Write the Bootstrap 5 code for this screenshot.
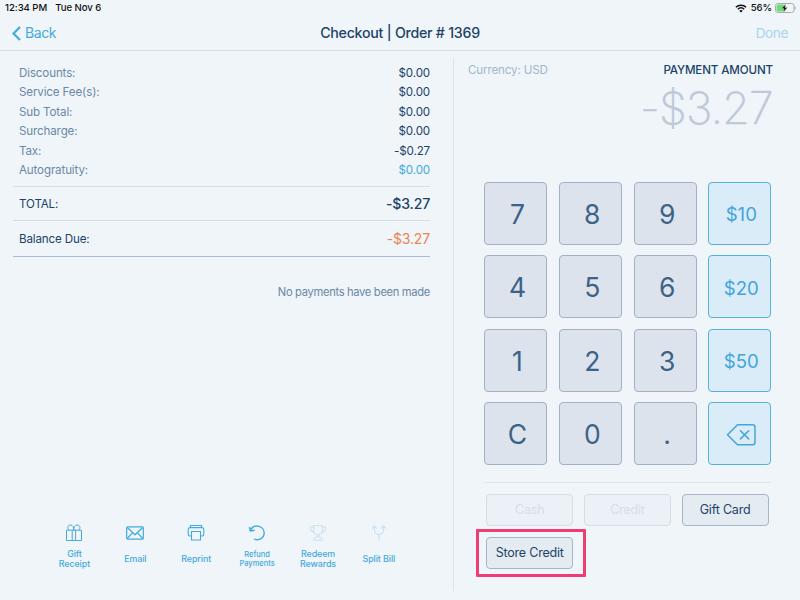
<!DOCTYPE html>
<html lang="en">
<head>
<meta charset="utf-8">
<meta name="viewport" content="width=device-width, initial-scale=1">
<title>Checkout | Order # 1369</title>
<link href="https://cdn.jsdelivr.net/npm/bootstrap@5.3.0/dist/css/bootstrap.min.css" rel="stylesheet">
<style>
  :root { --navy:#1d4368; --slate:#6b88a6; --sky:#45aadb; }
  body { width:800px; height:600px; background:#eff5f9; color:var(--navy); font-family:Inter,"Liberation Sans",sans-serif; font-size:11.6px; letter-spacing:-.14px; line-height:1; }
  svg { fill:none; stroke:currentColor; display:block; flex:none; }
  .status-bar { height:16px; padding:0 5px; color:#111; font-size:9.6px; font-weight:500; letter-spacing:-.05px; }
  .title-bar { height:35px; border-bottom:1px solid #d5dfe8; padding:0 12px; }
  .title-bar > * { flex:1 1 0; }
  .title-bar .heading { flex:0 0 auto; font-size:14.2px; font-weight:500; letter-spacing:-.25px; }
  .sky { color:var(--sky); }
  .back { font-size:14px; letter-spacing:-.4px; }
  .done { font-size:13.6px; letter-spacing:-.4px; color:#a9d6ec; padding-top:2px; }
  .summary { width:453px; padding:12px 23px 0 13px; }
  .line-item { height:19.5px; padding:1.5px 0 0 6px; }
  .line-item span:first-child { color:var(--slate); }
  .sum-row { border-top:1px solid #d5dfe8; padding:2px 0 0 6px; }
  .sum-row .amount { font-size:14px; letter-spacing:-.15px; padding-bottom:2px; }
  .orange { color:#ec8455; }
  .balance { border-bottom:1px solid #a9bbd0; height:37px; }
  .no-pay { color:var(--slate); margin-top:30px; font-size:11.2px; letter-spacing:-.33px; }
  .actions { margin:0 0 26px 31px; }
  .action { width:60.9px; flex:none; color:var(--sky); font-size:8.9px; font-weight:500; letter-spacing:-.1px; }
  .action svg { height:18px; width:18px; }
  .action .caption { height:30px; line-height:10px; margin-top:2px; }
  .action .tiny { font-size:7.5px; line-height:9px; letter-spacing:0; }
  .faded { color:#cce3f0; }
  .pay-panel { width:347px; margin:7px 0 9px; border-left:1px solid #dde5ec; padding:0 27px 0 14px; }
  .currency { color:#a3b5c9; }
  .big-amount { font-size:44.5px; letter-spacing:-.7px; font-weight:200; color:#bdc8d9; line-height:48px; height:48px; padding-top:1px; -webkit-text-stroke:.4px #bdc8d9; }
  .keypad { display:grid; grid-template-columns:repeat(4,63px); grid-template-rows:repeat(4,63px); column-gap:11.8px; row-gap:10.4px; margin:51px 0 0 16px; }
  .keypad .btn { --bs-btn-bg:#dce3ed; --bs-btn-border-color:#a1b1c6; --bs-btn-color:#3c6387; --bs-btn-border-radius:4px; padding:1px 0 0 4px; font-size:26.5px; line-height:1; }
  .keypad .btn.quick { --bs-btn-bg:#d9ecf7; --bs-btn-border-color:#55b2dc; --bs-btn-color:#45a5d9; font-size:18.6px; margin:0 .6px 0 -.6px; padding-top:2px; }
  .tenders { border-top:1px solid #dbe4eb; margin:16.9px 2px 0 16px; padding:11px 0 0 2.2px; display:grid; grid-template-columns:repeat(3,87px); gap:11.5px 10.7px; }
  .tenders .btn { height:31.5px; --bs-btn-bg:#e4ebf1; --bs-btn-border-color:#a5b6c8; --bs-btn-color:#1d4368; --bs-btn-border-radius:4px; --bs-btn-disabled-bg:#ecf1f8; --bs-btn-disabled-border-color:#d5dde5; --bs-btn-disabled-color:#d6dde5; --bs-btn-disabled-opacity:1; padding:1px 0 0; font-size:12.5px; letter-spacing:-.2px; line-height:1; }
  .spotlight { position:relative; }
  .spotlight::after { content:""; position:absolute; inset:-9px -13.5px -9.5px -11.5px; border:3px solid #ed3d72; border-radius:1px; pointer-events:none; }
</style>
</head>
<body class="d-flex flex-column overflow-hidden">
<header>
  <div class="status-bar d-flex justify-content-between align-items-center">
    <div class="d-flex"><span id="clock">12:34 PM</span><span class="ms-2" id="date">Tue Nov 6</span></div>
    <div class="d-flex align-items-center">
      <svg width="12" height="9" viewBox="0 0 12 9" stroke-width="1.5"><path d="M.9 3.2C3.8.5 8.2.5 11.1 3.2M2.8 5.2C4.7 3.5 7.3 3.5 9.2 5.2"/><path d="M4.2 6.7Q6 5.3 7.8 6.7L6 8.5Z" fill="currentColor" stroke="none"/></svg>
      <span style="margin-left:4px">56%</span>
      <svg width="21" height="10" viewBox="0 0 21 10" style="margin:0 -1px 0 3px"><rect x=".5" y=".5" width="18.5" height="9" rx="2.4" stroke="#a7abb0"/><path d="M1.5 3Q1.5 1.5 3 1.5H10.3V8.5H3Q1.5 8.5 1.5 7Z" fill="#6edb78" stroke="none"/><path d="M20 3.5V6.5" stroke="#a7abb0"/><path d="M10.8 1.2L6.5 5.6H9L8.3 9L12.6 4.5H10Z" fill="#111" stroke="#eff5fa" stroke-width=".3"/></svg>
    </div>
  </div>
  <nav class="title-bar d-flex align-items-center">
    <div class="back sky d-flex align-items-center"><svg width="9" height="15" viewBox="0 0 9 15" stroke-width="2.2"><path d="M8 .9L1.500 7.500L8 14.100"/></svg><span style="margin-left:4px">Back</span></div>
    <div class="heading">Checkout | Order # 1369</div>
    <div class="done text-end">Done</div>
  </nav>
</header>
<main class="d-flex flex-grow-1">
  <section class="summary d-flex flex-column">
    <div class="line-item d-flex justify-content-between align-items-center"><span>Discounts:</span><span>$0.00</span></div>
    <div class="line-item d-flex justify-content-between align-items-center"><span>Service Fee(s):</span><span>$0.00</span></div>
    <div class="line-item d-flex justify-content-between align-items-center"><span>Sub Total:</span><span>$0.00</span></div>
    <div class="line-item d-flex justify-content-between align-items-center"><span>Surcharge:</span><span>$0.00</span></div>
    <div class="line-item d-flex justify-content-between align-items-center"><span>Tax:</span><span>-$0.27</span></div>
    <div class="line-item d-flex justify-content-between align-items-center"><span>Autogratuity:</span><span class="sky">$0.00</span></div>
    <div class="sum-row d-flex justify-content-between align-items-center" style="margin-top:6px;height:34px"><span>TOTAL:</span><span class="amount" style="font-weight:500">-$3.27</span></div>
    <div class="sum-row balance d-flex justify-content-between align-items-center"><span>Balance Due:</span><span class="amount orange">-$3.27</span></div>
    <div class="no-pay text-end">No payments have been made</div>
    <div class="actions d-flex mt-auto">
      <div class="action d-flex flex-column align-items-center">
        <svg viewBox="0 0 18 18"><path d="M1.500 6.200H16.500V16.500H1.500ZM7.200 6.200V16.500M10.600 6.200V16.500M3.800 6.200C2.200 4.200 2.500 1 5.300 1C8.200 1 8.800 3.700 8.800 6.200M13.900 6.200C15.500 4.200 15.200 1 12.300 1C9.400 1 8.800 3.700 8.800 6.200"/></svg>
        <div class="caption d-flex align-items-center text-center">Gift<br>Receipt</div>
      </div>
      <div class="action d-flex flex-column align-items-center">
        <svg viewBox="0 0 18 18" stroke-width="1.200"><rect x=".7" y="2.800" width="16.600" height="12.400" rx="1"/><path d="M1.300 3.500L9 10.800L16.700 3.500M1.300 14.500L6.600 8.600M16.700 14.500L11.400 8.600"/></svg>
        <div class="caption d-flex align-items-center text-center">Email</div>
      </div>
      <div class="action d-flex flex-column align-items-center">
        <svg viewBox="0 0 18 18" stroke-width="1.100"><path d="M4.500 12H3C1.800 12 1.200 11.400 1.200 10.300V5.300C1.200 4.200 1.800 3.600 3 3.600H15C16.200 3.600 16.800 4.200 16.800 5.300V10.300C16.800 11.400 16.200 12 15 12H13.500M3.500 3.600V1.500H14.500V3.600M4.500 7.500H13.500V16H4.500Z"/></svg>
        <div class="caption d-flex align-items-center text-center">Reprint</div>
      </div>
      <div class="action d-flex flex-column align-items-center">
        <svg viewBox="0 0 18 18" stroke-width="1.400"><path d="M2.500 6.500C4 3 7 1.700 9.800 2.100C13.500 2.600 16.200 5.500 16.200 9C16.200 12.800 13.300 15.700 9.500 15.700C8 15.700 7 15.400 6 14.700M1.500 2.800L2.300 7L6.700 6.300"/></svg>
        <div class="caption tiny d-flex align-items-center text-center">Refund<br>Payments</div>
      </div>
      <div class="action d-flex flex-column align-items-center">
        <svg class="faded" viewBox="0 0 18 18" stroke-width="1.100"><path d="M4.600 1.500H13.400V6C13.400 9.500 11.200 10.700 9 10.700S4.600 9.500 4.600 6ZM4.600 3H1.500C1.500 6.800 2.800 8.300 5.500 8.600M13.400 3H16.500C16.500 6.800 15.200 8.300 12.500 8.600M7.700 10.700V13M10.300 10.700V13M5 16.300C5 13.900 6 13 7.700 13H10.300C12 13 13 13.900 13 16.300Z"/></svg>
        <div class="caption d-flex align-items-center text-center">Redeem<br>Rewards</div>
      </div>
      <div class="action d-flex flex-column align-items-center">
        <svg class="faded" viewBox="0 0 18 18" stroke-width="1.200"><path d="M9 16.500V10.500M4.500 2V6.500C4.500 9 7 10.700 9 10.700S13.500 9 13.500 6.500V2M2 4.700L4.500 1.800L7 4.700M11 4.700L13.500 1.800L16 4.700"/></svg>
        <div class="caption d-flex align-items-center text-center">Split Bill</div>
      </div>
    </div>
  </section>
  <section class="pay-panel">
    <div class="d-flex justify-content-between align-items-center" style="height:25px"><span class="currency">Currency: USD</span><span style="font-weight:500">PAYMENT AMOUNT</span></div>
    <div class="big-amount text-end">-$3.27</div>
    <div class="keypad">
      <button class="btn">7</button><button class="btn">8</button><button class="btn">9</button><button class="btn quick">$10</button>
      <button class="btn">4</button><button class="btn">5</button><button class="btn">6</button><button class="btn quick">$20</button>
      <button class="btn">1</button><button class="btn">2</button><button class="btn">3</button><button class="btn quick">$50</button>
      <button class="btn">C</button><button class="btn">0</button><button class="btn">.</button>
      <button class="btn quick d-flex align-items-center justify-content-center" aria-label="Delete"><svg width="30" height="22" viewBox="0 0 30 22" stroke-width="1.500" stroke-linecap="round" stroke-linejoin="round"><path d="M11.500 .8H26.500Q29 .8 29 3.300V18.300Q29 20.800 26.500 20.800H11.500L1.500 10.800ZM14.500 6.700L22.700 14.900M22.700 6.700L14.500 14.900"/></svg></button>
    </div>
    <div class="tenders">
      <button class="btn" disabled>Cash</button><button class="btn" disabled>Credit</button><button class="btn">Gift Card</button>
      <button class="btn spotlight">Store Credit</button>
    </div>
  </section>
</main>
<script src="https://cdn.jsdelivr.net/npm/bootstrap@5.3.0/dist/js/bootstrap.bundle.min.js"></script>
</body>
</html>
